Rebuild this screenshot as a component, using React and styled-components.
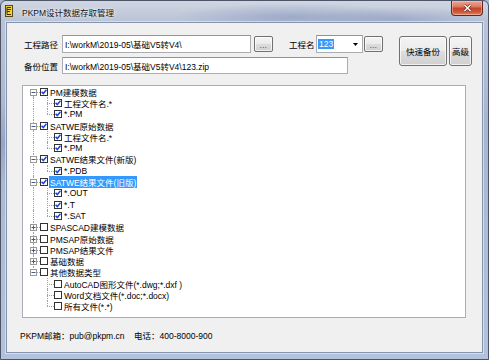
import React from 'react';
import styled, { createGlobalStyle, css } from 'styled-components';

const Global = createGlobalStyle`
  html, body { margin: 0; padding: 0; background: #a9b6cf; }
  body { font-family: "Liberation Sans", "Noto Sans CJK SC", sans-serif; font-size: 8.5px; color: #000; }
  * { box-sizing: border-box; }
`;

const Window = styled.div`
  width: 489px;
  height: 360px;
  display: flex;
  flex-direction: column;
  overflow: hidden;
  border: 1px solid #4d5566;
  border-radius: 6px 6px 0 0;
  background:
    radial-gradient(ellipse 120px 14px at 60% 16px, rgba(96, 116, 168, 0.35), transparent),
    radial-gradient(ellipse 90px 12px at 82% 18px, rgba(96, 116, 168, 0.3), transparent),
    radial-gradient(ellipse 160px 40px at 0% 40%, rgba(120, 130, 180, 0.35), transparent),
    linear-gradient(180deg, #d0d6e2 0px, #bac4d7 20px, #a8b5ce 120px, #b3c2dc 100%);
`;

const TitleBar = styled.div`
  height: 21px;
  flex: none;
  display: flex;
  align-items: flex-start;
  padding-left: 4px;
`;

const AppIcon = styled.svg`
  width: 8px;
  height: 12px;
  margin-top: 4px;
  flex: none;
`;

const Title = styled.div`
  margin-left: 9px;
  margin-top: 5px;
  font-size: 8.5px;
  color: #111;
  text-shadow: 0 0 5px rgba(255, 255, 255, 0.9), 0 0 2px rgba(255, 255, 255, 0.8);
`;

const CloseBtn = styled.div`
  margin-left: auto;
  margin-right: 5px;
  width: 32px;
  height: 15px;
  border: 1px solid #5e2a22;
  border-top: none;
  border-radius: 0 0 4px 4px;
  background: linear-gradient(180deg, #e9a898 0%, #dd7a62 40%, #c6432a 52%, #cf5a3a 80%, #e0896a 100%);
  display: flex;
  align-items: center;
  justify-content: center;
  box-shadow: inset 0 0 0 1px rgba(255, 210, 200, 0.45);
`;

const Client = styled.div`
  flex: 1;
  margin: 0 5px 6px 5px;
  background: #f0f0f0;
  border: 1px solid #8593ad;
  display: flex;
  flex-direction: column;
  box-shadow: 0 0 0 1px rgba(235, 240, 250, 0.6);
`;

const Form = styled.div`
  display: flex;
  align-items: flex-start;
  padding: 12px 0 0 17px;
`;

const Fields = styled.div`
  display: flex;
  flex-direction: column;
  gap: 4px;
`;

const FieldRow = styled.div`
  display: flex;
  align-items: center;
`;

const Label = styled.div`
  width: ${p => p.$w}px;
  margin-left: ${p => p.$ml || 0}px;
  flex: none;
  white-space: nowrap;
`;

const TextBox = styled.div`
  width: ${p => p.$w}px;
  height: ${p => p.$h}px;
  background: #fff;
  border: 1px solid #abadb3;
  border-top-color: #8e949c;
  display: flex;
  align-items: center;
  padding-left: 2px;
  white-space: nowrap;
  overflow: hidden;
`;

const Combo = styled(TextBox)`
  position: relative;
  padding-left: 1px;
`;

const Selected = styled.span`
  background: #3399ff;
  color: #fff;
  padding: 0 1px;
  line-height: 10px;
`;

const ComboArrow = styled.svg`
  position: absolute;
  right: 4px;
  top: 7px;
`;

const buttonFace = css`
  border: 1px solid #707070;
  background: linear-gradient(180deg, #f4f4f4 0%, #ebebeb 48%, #dddddd 52%, #d0d0d0 100%);
  box-shadow: inset 0 0 0 1px rgba(255, 255, 255, 0.7);
  display: flex;
  align-items: center;
  justify-content: center;
  flex: none;
`;

const SmallBtn = styled.div`
  ${buttonFace};
  width: 19px;
  height: 16px;
  border-radius: 2px;
  margin-left: ${p => p.$ml}px;
  font-size: 7px;
  letter-spacing: 0.5px;
  padding-top: 2px;
`;

const BigBtns = styled.div`
  display: flex;
  gap: 2px;
  margin: 1px 0 0 16px;
`;

const BigBtn = styled.div`
  ${buttonFace};
  width: ${p => p.$w}px;
  height: 30px;
  border-radius: 3px;
`;

const TreeBox = styled.div`
  margin: 11px 16px 0 15px;
  height: 233px;
  background: #fff;
  border: 1px solid #a9adb5;
  padding: 0 0 0 3px;
`;

const Row = styled.div`
  height: 11.3px;
  display: flex;
  align-items: stretch;
  white-space: nowrap;
`;

const Cell = styled.div`
  width: 14px;
  flex: none;
  position: relative;
  ${p => (p.$up || p.$down) && css`
    &::before {
      content: '';
      position: absolute;
      left: 7px;
      top: ${p.$up ? '0' : '50%'};
      bottom: ${p.$down ? '0' : '50%'};
      border-left: 1px dotted #a0a0a0;
    }
  `}
  ${p => p.$right && css`
    &::after {
      content: '';
      position: absolute;
      left: 7px;
      right: 0;
      top: 50%;
      border-top: 1px dotted #a0a0a0;
    }
  `}
`;

const Expander = styled.div`
  position: absolute;
  left: 4px;
  top: 50%;
  margin-top: -3px;
  width: 7px;
  height: 7px;
  background: #fff;
  border: 1px solid #9a9a9a;
  z-index: 1;
  display: flex;
  align-items: center;
  justify-content: center;
`;

const Check = styled.div`
  width: 8px;
  height: 8px;
  flex: none;
  align-self: center;
  border: 1px solid #333;
  background: #fff;
  display: flex;
  align-items: center;
  justify-content: center;
`;

const ItemText = styled.div`
  margin-left: 1px;
  padding: 0 1px;
  display: flex;
  align-items: center;
  ${p => p.$sel && css`
    background: #3399ff;
    color: #fff;
  `}
`;

const Footer = styled.div`
  flex: 1;
  display: flex;
  align-items: center;
  padding-left: 13px;
  white-space: pre;
  padding-bottom: 1px;
`;

const tree = [
  { label: 'PM建模数据', checked: true, expanded: true, children: ['工程文件名.*', '*.PM'] },
  { label: 'SATWE原始数据', checked: true, expanded: true, children: ['工程文件名.*', '*.PM'] },
  { label: 'SATWE结果文件(新版)', checked: true, expanded: true, children: ['*.PDB'] },
  { label: 'SATWE结果文件(旧版)', checked: true, expanded: true, selected: true, children: ['*.OUT', '*.T', '*.SAT'] },
  { label: 'SPASCAD建模数据' },
  { label: 'PMSAP原始数据' },
  { label: 'PMSAP结果文件' },
  { label: '基础数据' },
  {
    label: '其他数据类型',
    expanded: true,
    childChecked: false,
    children: ['AutoCAD图形文件(*.dwg;*.dxf )', 'Word文档文件(*.doc;*.docx)', '所有文件(*.*)'],
  },
];

const CheckBox = ({ checked }) => (
  <Check>
    {checked && (
      <svg width="6" height="6" viewBox="0 0 6 6">
        <path d="M0.6 2.8 L2.3 4.6 L5.5 0.8" fill="none" stroke="#1b44d8" strokeWidth="1.5" />
      </svg>
    )}
  </Check>
);

const ExpandBox = ({ open }) => (
  <Expander>
    <svg width="5" height="5" viewBox="0 0 5 5">
      <path d="M0.5 2.5 H4.5" stroke="#4a5a7a" strokeWidth="1" />
      {!open && <path d="M2.5 0.5 V4.5" stroke="#4a5a7a" strokeWidth="1" />}
    </svg>
  </Expander>
);

function TreeView() {
  const rows = [];
  tree.forEach((node, i) => {
    const first = i === 0;
    const last = i === tree.length - 1;
    rows.push(
      <Row key={`r${i}`}>
        <Cell $up={!first} $down={!last} $right>
          <ExpandBox open={!!node.expanded} />
        </Cell>
        <CheckBox checked={!!node.checked} />
        <ItemText $sel={node.selected}>{node.label}</ItemText>
      </Row>
    );
    if (node.expanded && node.children) {
      node.children.forEach((c, j) => {
        const lastChild = j === node.children.length - 1;
        rows.push(
          <Row key={`r${i}-${j}`}>
            <Cell $up={!last} $down={!last} />
            <Cell $up $down={!lastChild} $right />
            <CheckBox checked={node.childChecked !== false && !!node.checked} />
            <ItemText>{c}</ItemText>
          </Row>
        );
      });
    }
  });
  return <TreeBox>{rows}</TreeBox>;
}

export default function App() {
  return (
    <>
      <Global />
      <Window>
        <TitleBar>
          <AppIcon viewBox="0 0 8 12">
            <rect x="0.5" y="0.5" width="7" height="11" fill="#f3d23a" stroke="#5a4a10" />
            <path d="M2 2.5 H6 M2 4.5 H6 M2 6.5 H5 M2 2.5 V9.5 H6" stroke="#3a3010" strokeWidth="1" fill="none" />
          </AppIcon>
          <Title>PKPM设计数据存取管理</Title>
          <CloseBtn>
            <svg width="9" height="8" viewBox="0 0 9 8">
              <path d="M1.5 1 L7.5 7 M7.5 1 L1.5 7" stroke="#5a1a10" strokeWidth="2.6" />
              <path d="M1.5 1 L7.5 7 M7.5 1 L1.5 7" stroke="#ffffff" strokeWidth="1.5" />
            </svg>
          </CloseBtn>
        </TitleBar>
        <Client>
          <Form>
            <Fields>
              <FieldRow>
                <Label $w={38}>工程路径</Label>
                <TextBox $w={189} $h={18}>I:\workM\2019-05\基础V5转V4\</TextBox>
                <SmallBtn $ml={3}>...</SmallBtn>
                <Label $w={27} $ml={16}>工程名</Label>
                <Combo $w={47} $h={18}>
                  <Selected>123</Selected>
                  <ComboArrow width="5" height="3" viewBox="0 0 5 3">
                    <path d="M0 0 H5 L2.5 3 Z" fill="#000" />
                  </ComboArrow>
                </Combo>
                <SmallBtn $ml={1}>...</SmallBtn>
              </FieldRow>
              <FieldRow>
                <Label $w={38}>备份位置</Label>
                <TextBox $w={286} $h={17}>I:\workM\2019-05\基础V5转V4\123.zip</TextBox>
              </FieldRow>
            </Fields>
            <BigBtns>
              <BigBtn $w={48}>快速备份</BigBtn>
              <BigBtn $w={23}>高级</BigBtn>
            </BigBtns>
          </Form>
          <TreeView />
          <Footer>{'PKPM邮箱：pub@pkpm.cn    电话：400-8000-900'}</Footer>
        </Client>
      </Window>
    </>
  );
}
